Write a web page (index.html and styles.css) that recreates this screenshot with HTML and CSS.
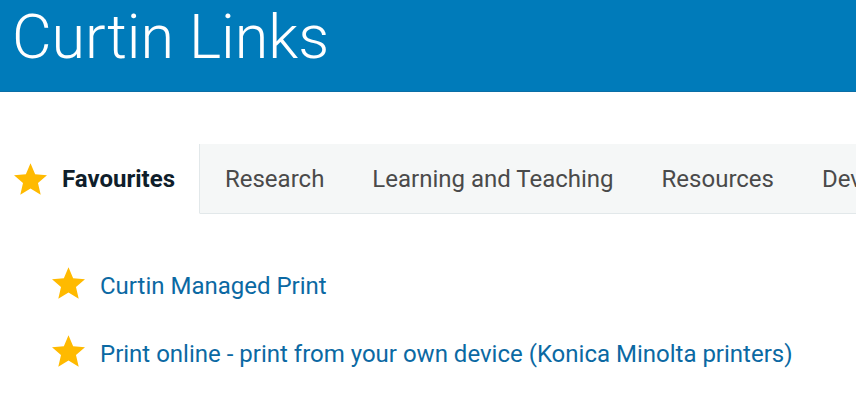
FILE: index.html
```html
<!DOCTYPE html>
<html lang="en">
<head>
<meta charset="utf-8">
<title>Curtin Links</title>
<link rel="stylesheet" href="styles.css">
</head>
<body>
<header class="banner">
  <h1 class="banner-title">Curtin Links</h1>
</header>
<nav class="tabs">
  <div class="tab tab-active">
    <svg class="star" viewBox="2 2 20 19" aria-hidden="true"><path d="M12 17.27L18.18 21l-1.64-7.03L22 9.24l-7.19-.61L12 2 9.19 8.63 2 9.24l5.46 4.73L5.82 21z"/></svg>
    <span>Favourites</span>
  </div>
  <div class="tab">Research</div>
  <div class="tab">Learning and Teaching</div>
  <div class="tab">Resources</div>
  <div class="tab">Development</div>
</nav>
<ul class="links">
  <li class="link-row">
    <svg class="star" viewBox="2 2 20 19" aria-hidden="true"><path d="M12 17.27L18.18 21l-1.64-7.03L22 9.24l-7.19-.61L12 2 9.19 8.63 2 9.24l5.46 4.73L5.82 21z"/></svg>
    <a class="link" href="#">Curtin Managed Print</a>
  </li>
  <li class="link-row">
    <svg class="star" viewBox="2 2 20 19" aria-hidden="true"><path d="M12 17.27L18.18 21l-1.64-7.03L22 9.24l-7.19-.61L12 2 9.19 8.63 2 9.24l5.46 4.73L5.82 21z"/></svg>
    <a class="link" href="#">Print online - print from your own device (Konica Minolta printers)</a>
  </li>
</ul>
</body>
</html>
```

FILE: styles.css
```css
html, body {
  margin: 0;
  padding: 0;
  background: #ffffff;
  font-family: Roboto, "Liberation Sans", sans-serif;
  overflow: hidden;
}

.banner {
  height: 91px;
  background: #007bba;
  border-bottom: 1px solid #0a6ea6;
  display: flex;
  align-items: flex-start;
  padding-left: 12px;
}

.banner-title {
  margin: 0;
  color: #ffffff;
  font-weight: 300;
  font-size: 61px;
  line-height: 74px;
}

.tabs {
  margin-top: 52px;
  display: flex;
  height: 70px;
  white-space: nowrap;
}

.tab {
  display: flex;
  align-items: center;
  padding: 0 24px;
  background: #f5f7f7;
  border-bottom: 1px solid #e2e8ea;
  color: #4a4a4a;
  font-size: 24px;
  flex-shrink: 0;
}

.tab:nth-child(2) {
  padding-left: 25px;
}

.tab-active {
  background: #ffffff;
  border-bottom-color: #ffffff;
  border-right: 1px solid #e2e8ea;
  padding: 0 24px 0 14px;
  gap: 15px;
  color: #0f1e2b;
  font-weight: 700;
}

.star {
  width: 33px;
  height: 32px;
  fill: #ffba00;
  flex-shrink: 0;
}

.links {
  list-style: none;
  margin: 35px 0 0 0;
  padding: 0 0 0 52px;
}

.link-row {
  display: flex;
  align-items: center;
  gap: 15px;
  height: 68px;
}

.link {
  color: #0b69a3;
  text-decoration: none;
  font-size: 24px;
  padding-top: 6px;
}
```
